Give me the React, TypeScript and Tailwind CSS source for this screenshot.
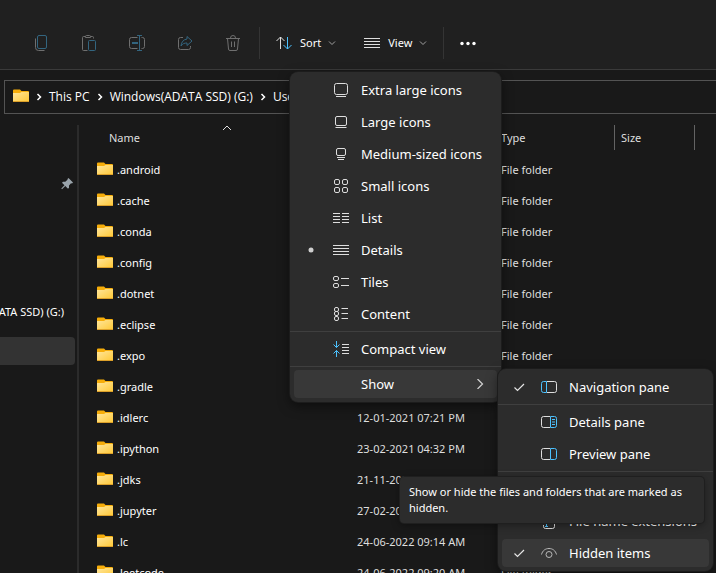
import React from "react"

interface Folder {
  name: string
  modified?: string
}

interface MenuItemProps {
  label: string
  icon?: React.ReactNode
  mark?: React.ReactNode
  active?: boolean
  submenu?: boolean
}

const FOLDERS: Folder[] = [
  { name: ".android" },
  { name: ".cache" },
  { name: ".conda" },
  { name: ".config" },
  { name: ".dotnet" },
  { name: ".eclipse" },
  { name: ".expo" },
  { name: ".gradle" },
  { name: ".idlerc", modified: "12-01-2021 07:21 PM" },
  { name: ".ipython", modified: "23-02-2021 04:32 PM" },
  { name: ".jdks", modified: "21-11-2021 01:44 PM" },
  { name: ".jupyter", modified: "27-02-2022" },
  { name: ".lc", modified: "24-06-2022 09:14 AM" },
  { name: ".leetcode", modified: "24-06-2022 09:20 AM" },
]

const BLUE = "#4cc2ff"
const DIM = "#6f6f6f"
const DIM_BLUE = "#33657f"

function Icon({ children, color = "#dedede" }: { children: React.ReactNode; color?: string }) {
  return (
    <svg className="size-4 shrink-0" viewBox="0 0 16 16" fill="none" stroke={color} aria-hidden="true">
      {children}
    </svg>
  )
}

function FolderIcon() {
  return (
    <svg className="size-4 shrink-0" viewBox="0 0 16 16" aria-hidden="true">
      <defs>
        <linearGradient id="folder" x1="0" y1="0" x2="1" y2="1">
          <stop offset="0" stopColor="#ffe69c" />
          <stop offset="1" stopColor="#ffc835" />
        </linearGradient>
      </defs>
      <path d="M0 1.500a1 1 0 0 1 1-1h6l1.500 1.500H15a1 1 0 0 1 1 1v9H0z" fill="#f6ad0a" />
      <path d="M0 4h7l1.500-1h7.500v10H0z" fill="url(#folder)" />
      <path d="M0 12h16v.5a.5.500 0 0 1-.5.500H.5a.5.500 0 0 1-.5-.5z" fill="#dca02a" />
    </svg>
  )
}

function Chevron({ className, d }: { className: string; d: string }) {
  return (
    <svg className={className} viewBox="0 0 8 8" fill="none" stroke="currentColor" aria-hidden="true">
      <path d={d} />
    </svg>
  )
}

const Check = () => (
  <Icon color="#e6e6e6">
    <path d="M3.500 8.500l3 3 6.500-6.500" strokeWidth="1.200" />
  </Icon>
)

const Dot = () => (
  <Icon>
    <circle cx="8" cy="8" r="2.500" fill="#cfcfcf" stroke="none" />
  </Icon>
)

const LinesIcon = () => (
  <Icon>
    <path d="M0 3.500h16M0 6.500h16M0 9.500h16M0 12.500h16" />
  </Icon>
)

const VIEW_ITEMS: MenuItemProps[] = [
  {
    label: "Extra large icons",
    icon: <Icon><rect x="1.500" y="1.500" width="13" height="11" rx="2" /><path d="M3 14.500h10" /></Icon>,
  },
  {
    label: "Large icons",
    icon: <Icon><rect x="2.500" y="2.500" width="11" height="9" rx="1.500" /><path d="M2.500 13.500h11" /></Icon>,
  },
  {
    label: "Medium-sized icons",
    icon: <Icon><rect x="3.500" y="2.500" width="9" height="7" rx="1.500" /><path d="M4 11.500h8M5 13.500h6" /></Icon>,
  },
  {
    label: "Small icons",
    icon: (
      <Icon>
        <rect x="1.500" y="1.500" width="5" height="5" rx="1.500" />
        <rect x="9.500" y="1.500" width="5" height="5" rx="1.500" />
        <rect x="1.500" y="9.500" width="5" height="5" rx="1.500" />
        <rect x="9.500" y="9.500" width="5" height="5" rx="1.500" />
      </Icon>
    ),
  },
  {
    label: "List",
    icon: <Icon><path d="M0 3.500h7M0 6.500h7M0 9.500h7M0 12.500h7M9 3.500h7M9 6.500h7M9 9.500h7M9 12.500h7" /></Icon>,
  },
  { label: "Details", icon: <LinesIcon />, mark: <Dot /> },
  {
    label: "Tiles",
    icon: (
      <Icon>
        <rect x=".5" y="2.500" width="5" height="4" rx="1.500" />
        <rect x=".5" y="9.500" width="5" height="4" rx="1.500" />
        <path d="M8 4.500h8M8 11.500h8" />
      </Icon>
    ),
  },
  {
    label: "Content",
    icon: (
      <Icon>
        <rect x="1.500" y="1.500" width="4" height="4" rx="1.500" />
        <rect x="1.500" y="5.500" width="4" height="4" rx="1.500" />
        <rect x="1.500" y="10.500" width="4" height="4" rx="1.500" />
        <path d="M8.500 2.500h6.500M8.500 7.500h6.500M8.500 12.500h6.500" />
      </Icon>
    ),
  },
]

function MenuItem({ label, icon, mark, active, submenu }: MenuItemProps) {
  return (
    <button
      role="menuitem"
      className={`mx-1 my-0.5 flex h-7 items-center rounded pl-[9px] text-left text-[13px] whitespace-nowrap ${active ? "bg-[#383838]" : ""}`}
    >
      <span className="mr-3.5 w-4 shrink-0">{mark}</span>
      <span className="mr-3 w-4 shrink-0">{icon}</span>
      <span className="flex-1 pt-0.5">{label}</span>
      {submenu && <Chevron className="mr-3 size-2.5 text-[#cfcfcf]" d="M2 0l4 4-4 4" />}
    </button>
  )
}

function Separator() {
  return <div role="separator" className="my-px h-px shrink-0 bg-[#3f3f3f]" />
}

function ToolButton({ label, children }: { label: string; children: React.ReactNode }) {
  return (
    <button aria-label={label} className="flex h-8 w-12 items-center justify-center">
      {children}
    </button>
  )
}

function Toolbar() {
  return (
    <header className="flex shrink-0 items-center border-b border-[#3a3a3a] bg-[#202020] pt-[27px] pb-2.5 pl-[17px]">
      <ToolButton label="Copy">
        <Icon color={DIM}>
          <path d="M2.500 3.500v9a3 3 0 0 0 3 3h6" />
          <rect x="4.500" y=".5" width="9" height="13" rx="1.500" stroke={DIM_BLUE} />
        </Icon>
      </ToolButton>
      <ToolButton label="Paste">
        <Icon color={DIM}>
          <path d="M4.500 1.500H2.500a1 1 0 0 0-1 1v12a1 1 0 0 0 1 1h4M9.500 1.500h2a1 1 0 0 1 1 1v1M4.500 2.500v-1a1 1 0 0 1 1-1h3a1 1 0 0 1 1 1v1z" />
          <rect x="7.500" y="5.500" width="7" height="10" rx="1" stroke={DIM_BLUE} />
        </Icon>
      </ToolButton>
      <ToolButton label="Rename">
        <Icon color={DIM}>
          <path d="M8.500 2.500h-6a2 2 0 0 0-2 2v7a2 2 0 0 0 2 2h6M12.500 2.500h1a2 2 0 0 1 2 2v7a2 2 0 0 1-2 2h-1" />
          <path d="M10.500 1v14M8 .5h5M8 15.500h5" stroke={DIM_BLUE} />
          <path d="M3 8h6" stroke={DIM_BLUE} strokeWidth="2" />
        </Icon>
      </ToolButton>
      <ToolButton label="Share">
        <Icon color={DIM}>
          <path d="M6 2.500H3.500a2 2 0 0 0-2 2v8a2 2 0 0 0 2 2h8a2 2 0 0 0 2-2v-1.500" />
          <path d="M10 1.500L15 6l-5 4.500V8C7.500 8 5.500 8.500 4 11c.3-4 2.500-6.500 6-7z" stroke={DIM_BLUE} strokeLinejoin="round" />
        </Icon>
      </ToolButton>
      <ToolButton label="Delete">
        <Icon color={DIM}>
          <path d="M1 3.500h14M5.500 3a2.500 2.500 0 0 1 5 0M2.500 3.500l1 10.500a1.500 1.500 0 0 0 1.500 1.500h6a1.500 1.500 0 0 0 1.500-1.500l1-10.500M6.500 6.500v5.500M9.500 6.500v5.500" />
        </Icon>
      </ToolButton>
      <div className="ml-0.5 h-8 w-px bg-[#343434]" />
      <button className="ml-4 flex h-8 items-center text-[11px]">
        <Icon>
          <path d="M4.500 14V2M.5 6l4-4 4 4" />
          <path d="M11.500 2v12M7.500 10l4 4 4-4" stroke={BLUE} />
        </Icon>
        <span className="ml-2">Sort</span>
        <Chevron className="ml-[7px] size-2 text-[#a0a0a0]" d="M1 2.500l3 3 3-3" />
      </button>
      <button className="ml-7 flex h-8 items-center text-[11px]" aria-haspopup="menu" aria-expanded="true">
        <LinesIcon />
        <span className="ml-2">View</span>
        <Chevron className="ml-[7px] size-2 text-[#a0a0a0]" d="M1 2.500l3 3 3-3" />
      </button>
      <div className="ml-4 h-8 w-px bg-[#343434]" />
      <button aria-label="See more" className="ml-4 flex h-8 items-center">
        <Icon>
          <g fill="#fff" stroke="none">
            <circle cx="2" cy="8.500" r="1.700" />
            <circle cx="8" cy="8.500" r="1.700" />
            <circle cx="14" cy="8.500" r="1.700" />
          </g>
        </Icon>
      </button>
    </header>
  )
}

function AddressBar() {
  const arrow = <Chevron className="size-2 shrink-0 stroke-[1.500]" d="M2.500 1l3 3-3 3" />
  return (
    <nav
      aria-label="Address"
      className="mt-2.5 ml-1 flex h-[34px] shrink-0 items-center border-y border-l border-[#535353] pl-2 font-['Segoe_UI','Open_Sans',sans-serif] text-xs whitespace-nowrap"
    >
      <FolderIcon />
      <span className="mx-1.5 flex">{arrow}</span>
      <a href="#this-pc">This PC</a>
      <span className="mx-1.5 flex">{arrow}</span>
      <a href="#drive">Windows(ADATA SSD) (G:)</a>
      <span className="mx-1.5 flex">{arrow}</span>
      <a href="#users">Users</a>
    </nav>
  )
}

function Sidebar() {
  return (
    <aside className="flex w-[79px] shrink-0 flex-col overflow-hidden border-r-2 border-[#2b2b2b] text-[11px]">
      <div className="mt-[50px] flex justify-end pr-0.5">
        <svg className="size-4" viewBox="0 0 16 16" fill="#9aa4ab" aria-hidden="true">
          <path d="M9.500 3l4.500 4.500-1 1-1-.2-2 2.200v2.300l-1 1-2.700-2.700L3 14.200l-.7-.7L5.500 10.300 3 7.700l1-1h2.300l2.200-2L8.500 4z" />
        </svg>
      </div>
      <a href="#drive" className="mt-28 flex h-[18px] items-center justify-end pr-[13px] whitespace-nowrap">
        ATA SSD) (G:)
      </a>
      <div className="mt-4 mr-0.5 h-7 rounded-r-sm bg-[#333333]" />
    </aside>
  )
}

function FileTable() {
  return (
    <table className="w-full table-fixed self-start text-left text-[11px] whitespace-nowrap">
      <colgroup>
        <col className="w-[270px]" />
        <col className="w-36" />
        <col className="w-[122px]" />
        <col className="w-20" />
        <col />
      </colgroup>
      <thead className="text-[#dedede]">
        <tr className="h-[29px] align-top leading-[25px]">
          <th className="relative pl-[30px] font-normal">
            Name
            <Chevron className="absolute top-0 left-[144px] size-2" d="M0 5l4-4 4 4" />
          </th>
          <th />
          <th className="p-0 font-normal"><div className="border-r border-[#636363] pl-2">Type</div></th>
          <th className="p-0 font-normal"><div className="border-r border-[#636363] pl-1.5">Size</div></th>
          <th />
        </tr>
      </thead>
      <tbody>
        {FOLDERS.map(folder => (
          <tr key={folder.name} className="h-[31px]">
            <td className="py-0 pl-[18px]">
              <div className="flex items-center gap-1">
                <FolderIcon />
                <span className="pt-0.5">{folder.name}</span>
              </div>
            </td>
            <td className="pt-0.5 pb-0 pl-2 text-[#dedede]">{folder.modified}</td>
            <td className="pt-0.5 pb-0 pl-2 text-[#dedede]">File folder</td>
            <td />
            <td />
          </tr>
        ))}
      </tbody>
    </table>
  )
}

function ViewMenu() {
  return (
    <div role="menu" aria-label="View" className="absolute top-[72px] left-[290px] flex w-[211px] flex-col rounded-lg bg-[#2c2c2c] py-0.5 shadow-[0_4px_12px_rgba(0,0,0,0.5)] ring-1 ring-[#1c1c1c]">
      {VIEW_ITEMS.map(item => (
        <MenuItem key={item.label} {...item} />
      ))}
      <Separator />
      <MenuItem
        label="Compact view"
        icon={
          <Icon>
            <path d="M3.500 0v6.500M.5 3.500l3 3 3-3M3.500 16V9.500M.5 12.500l3-3 3 3" stroke={BLUE} />
            <path d="M9 3.500h7M9 6.500h7M9 9.500h7M9 12.500h7" />
          </Icon>
        }
      />
      <Separator />
      <MenuItem label="Show" active submenu />
    </div>
  )
}

function ShowMenu() {
  return (
    <div role="menu" aria-label="Show" className="absolute top-[369px] left-[498px] flex w-[215px] flex-col rounded-lg bg-[#2c2c2c] py-0.5 shadow-[0_4px_12px_rgba(0,0,0,0.5)] ring-1 ring-[#1c1c1c]">
      <MenuItem
        label="Navigation pane"
        mark={<Check />}
        icon={
          <Icon>
            <path d="M6 2.500h7.500a2 2 0 0 1 2 2v7a2 2 0 0 1-2 2H6" />
            <path d="M5.500 2.500h-3a2 2 0 0 0-2 2v7a2 2 0 0 0 2 2h3z" stroke={BLUE} />
          </Icon>
        }
      />
      <Separator />
      <MenuItem
        label="Details pane"
        icon={
          <Icon>
            <path d="M9 2.500H2.500a2 2 0 0 0-2 2v7a2 2 0 0 0 2 2H9" />
            <path d="M9.500 2.500h4a2 2 0 0 1 2 2v7a2 2 0 0 1-2 2h-4zM11 5.500h3M11 8h3M11 10.500h3" stroke={BLUE} />
          </Icon>
        }
      />
      <MenuItem
        label="Preview pane"
        icon={
          <Icon>
            <path d="M9 2.500H2.500a2 2 0 0 0-2 2v7a2 2 0 0 0 2 2H9" />
            <path d="M9.500 2.500h4a2 2 0 0 1 2 2v7a2 2 0 0 1-2 2h-4z" stroke={BLUE} />
          </Icon>
        }
      />
      <Separator />
      <MenuItem label="Item check boxes" />
      <MenuItem
        label="File name extensions"
        icon={
          <Icon>
            <path d="M2.500 9V2.500a2 2 0 0 1 2-2h5l4 4v9a2 2 0 0 1-2 2h-7a2 2 0 0 1-2-2V12" />
            <path d="M5.500 7v6M4 13.500h3" stroke={BLUE} />
          </Icon>
        }
      />
      <MenuItem
        label="Hidden items"
        active
        mark={<Check />}
        icon={
          <Icon color="#b8b8b8">
            <path d="M.5 9.500C1.500 5.500 4.500 3.500 8 3.500s6.500 2 7.500 6" />
            <circle cx="8" cy="9.500" r="3" />
          </Icon>
        }
      />
    </div>
  )
}

export default function App() {
  return (
    <div className="relative flex h-screen flex-col overflow-hidden bg-[#191919] font-['Segoe_UI','Noto_Sans','Open_Sans',sans-serif] text-white">
      <Toolbar />
      <AddressBar />
      <main className="mt-[11px] flex min-h-0 flex-1">
        <Sidebar />
        <FileTable />
      </main>
      <ViewMenu />
      <ShowMenu />
      <div role="tooltip" className="absolute top-[477px] left-[400px] w-[304px] rounded bg-[#2c2c2c] px-[9px] py-[7px] text-[11px] leading-4 shadow-[0_2px_8px_rgba(0,0,0,0.4)] ring-1 ring-[#1f1f1f]">
        Show or hide the files and folders that are marked as hidden.
      </div>
    </div>
  )
}
